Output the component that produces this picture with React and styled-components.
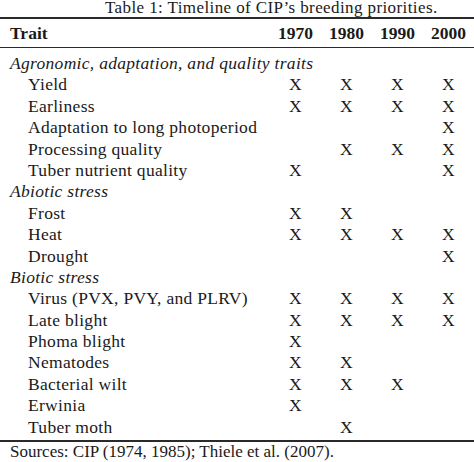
import React from 'react'
import styled, { createGlobalStyle } from 'styled-components'

const GlobalStyle = createGlobalStyle`
  html, body {
    margin: 0;
    padding: 0;
    background: #fff;
  }
  body {
    font-family: "Liberation Serif", "Times New Roman", serif;
    color: #1a1a1a;
  }
`

const Page = styled.div`
  width: 474px;
  height: 462px;
  overflow: hidden;
  background: #fff;
`

const Caption = styled.div`
  height: 17px;
  line-height: 16px;
  padding-left: 105px;
  font-size: 17px;
  letter-spacing: 0.4px;
  white-space: nowrap;
`

const Rule = styled.div`
  height: ${({ thick }) => (thick ? '2px' : '1px')};
  background: #2a2a2a;
`

const Grid = styled.div`
  display: grid;
  grid-template-columns: 1fr 51px 51px 51px 51px;
  padding-top: ${({ top }) => top || 0}px;
  padding-bottom: ${({ bottom }) => bottom || 0}px;
`

const Cell = styled.div`
  height: ${({ h }) => h || 21.4}px;
  line-height: ${({ h }) => h || 21.4}px;
  font-size: 17.5px;
  letter-spacing: ${({ bold }) => (bold ? '0' : '0.3px')};
  white-space: nowrap;
  text-align: ${({ center }) => (center ? 'center' : 'left')};
  padding-left: ${({ indent }) => indent || 0}px;
  font-weight: ${({ bold }) => (bold ? 700 : 400)};
  font-style: ${({ italic }) => (italic ? 'italic' : 'normal')};
`

const Sources = styled.div`
  padding-left: 10px;
  height: 20px;
  line-height: 20px;
  font-size: 17px;
  white-space: nowrap;
`

const years = ['1970', '1980', '1990', '2000']

const sections = [
  {
    name: 'Agronomic, adaptation, and quality traits',
    rows: [
      ['Yield', [1, 1, 1, 1]],
      ['Earliness', [1, 1, 1, 1]],
      ['Adaptation to long photoperiod', [0, 0, 0, 1]],
      ['Processing quality', [0, 1, 1, 1]],
      ['Tuber nutrient quality', [1, 0, 0, 1]],
    ],
  },
  {
    name: 'Abiotic stress',
    rows: [
      ['Frost', [1, 1, 0, 0]],
      ['Heat', [1, 1, 1, 1]],
      ['Drought', [0, 0, 0, 1]],
    ],
  },
  {
    name: 'Biotic stress',
    rows: [
      ['Virus (PVX, PVY, and PLRV)', [1, 1, 1, 1]],
      ['Late blight', [1, 1, 1, 1]],
      ['Phoma blight', [1, 0, 0, 0]],
      ['Nematodes', [1, 1, 0, 0]],
      ['Bacterial wilt', [1, 1, 1, 0]],
      ['Erwinia', [1, 0, 0, 0]],
      ['Tuber moth', [0, 1, 0, 0]],
    ],
  },
]

const App = () => {
  return (
    <Page>
      <GlobalStyle />
      <Caption>Table 1: Timeline of CIP’s breeding priorities.</Caption>
      <Rule thick />
      <Grid>
        <Cell h={28} bold indent={10}>
          Trait
        </Cell>
        {years.map((y) => (
          <Cell key={y} h={28} bold center>
            {y}
          </Cell>
        ))}
      </Grid>
      <Rule />
      <Grid top={5} bottom={2}>
        {sections.map((s) => (
          <React.Fragment key={s.name}>
            <Cell italic indent={10} style={{ gridColumn: '1 / -1' }}>
              {s.name}
            </Cell>
            {s.rows.map(([label, marks]) => (
              <React.Fragment key={label}>
                <Cell indent={28}>{label}</Cell>
                {marks.map((m, i) => (
                  <Cell key={i} center>
                    {m ? 'X' : ''}
                  </Cell>
                ))}
              </React.Fragment>
            ))}
          </React.Fragment>
        ))}
      </Grid>
      <Rule thick />
      <Sources>Sources: CIP (1974, 1985); Thiele et al. (2007).</Sources>
    </Page>
  )
}

export default App
